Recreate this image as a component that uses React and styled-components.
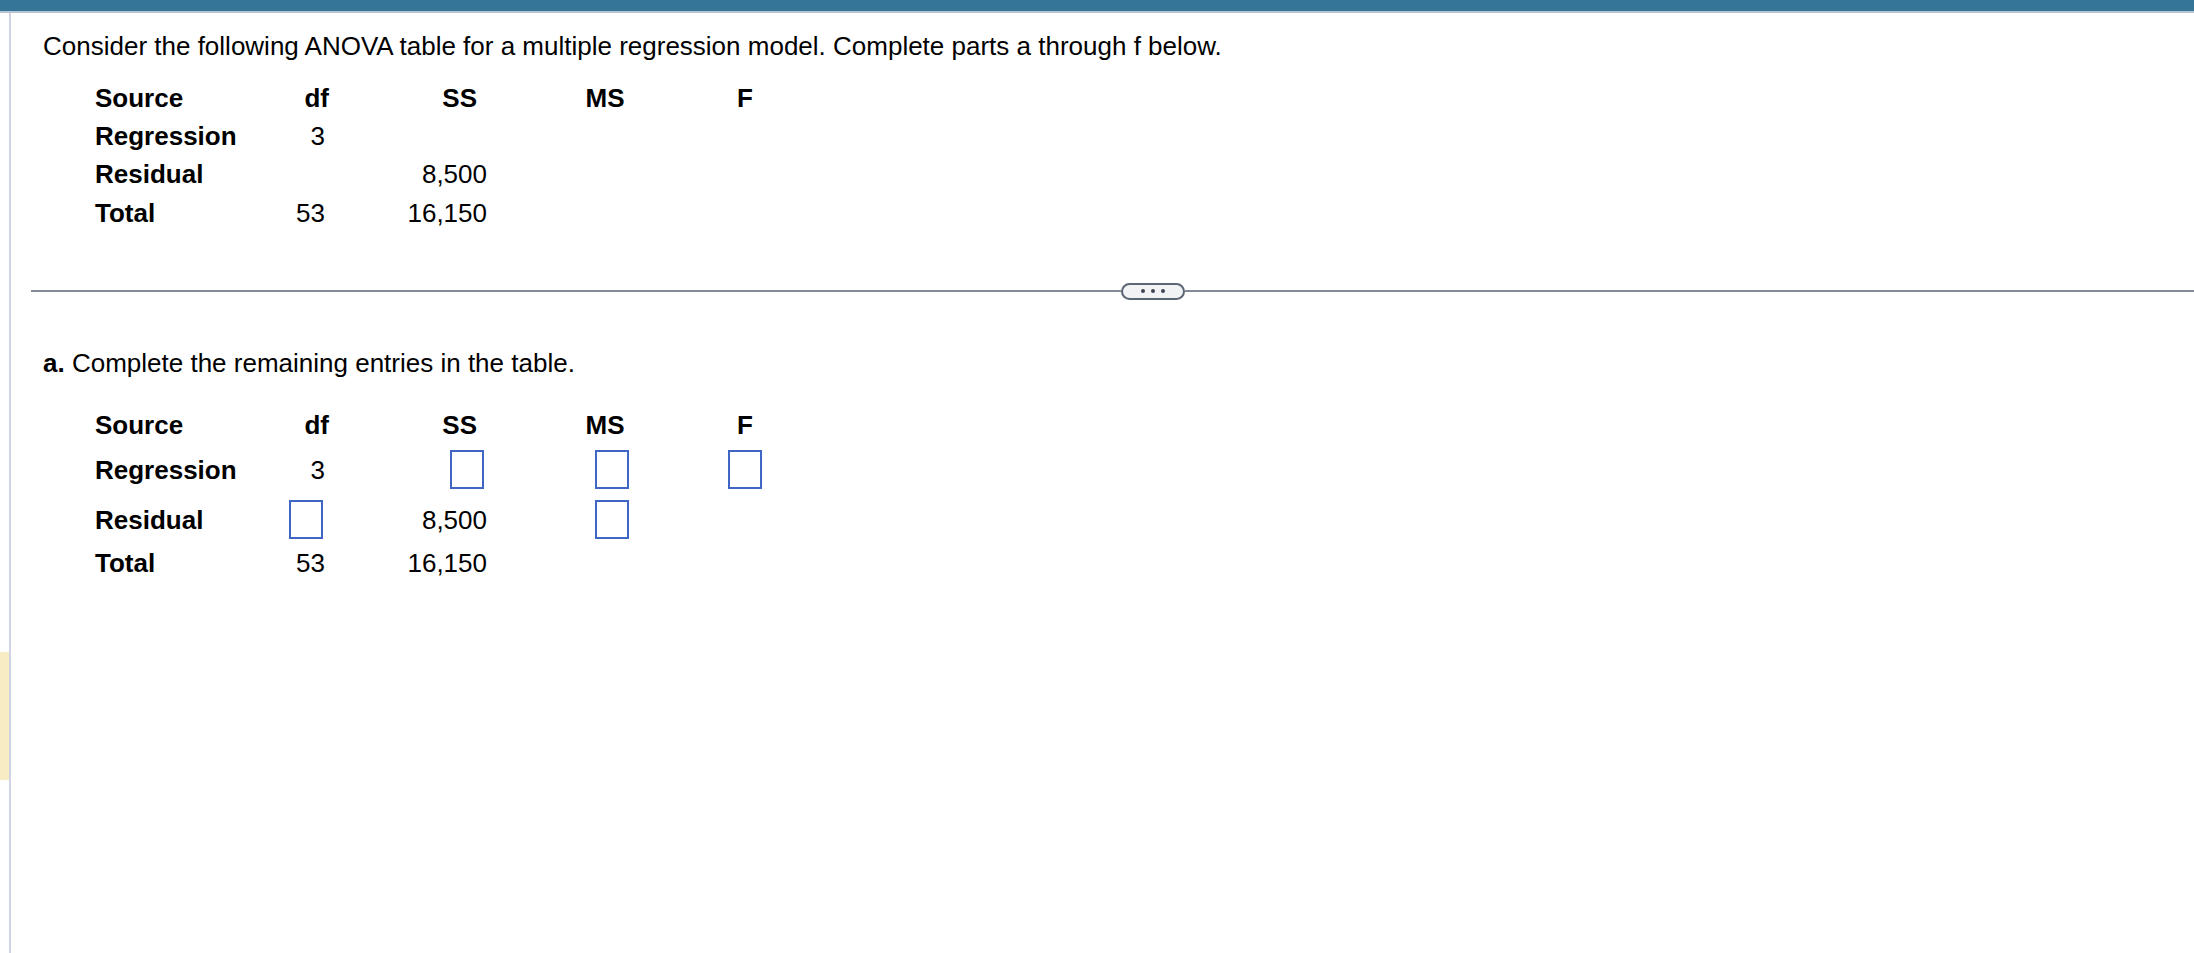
import styled, { createGlobalStyle } from 'styled-components'

const GlobalStyle = createGlobalStyle`
  html, body {
    margin: 0;
    padding: 0;
    background: #fff;
  }
  body {
    font-family: "Liberation Sans", Arial, Helvetica, sans-serif;
    color: #000;
    overflow: hidden;
  }
`

const TopBar = styled.div`
  height: 11px;
  background: #357597;
  border-bottom: 2px solid #b8c4d2;
`

const Layout = styled.div`
  display: flex;
  min-height: calc(100vh - 13px);
`

const Gutter = styled.div`
  width: 9px;
  flex: 0 0 9px;
`

const Marker = styled.div`
  margin-top: 639px;
  height: 128px;
  background: #f8ecc5;
`

const Main = styled.div`
  flex: 1;
  border-left: 2px solid #d0d3e2;
  padding-left: 20px;
  padding-top: 18px;
`

const Block = styled.div`
  padding-left: 12px;
`

const Prompt = styled.p`
  margin: 0;
  font-size: 26px;
  line-height: 30px;
  white-space: nowrap;
`

const Grid = styled.div`
  display: grid;
  grid-template-columns: 175px 60px 160px 230px 50px;
  grid-template-rows: ${p => p.$rows};
  align-items: center;
  margin-left: 52px;
  margin-top: ${p => p.$top}px;
  font-size: 26px;
  line-height: 30px;
`

const Cell = styled.div`
  display: flex;
  justify-content: ${p =>
    p.$align === 'right' ? 'flex-end' : p.$align === 'center' ? 'center' : 'flex-start'};
  padding-right: ${p => p.$pr || 0}px;
  padding-left: ${p => p.$pl || 0}px;
  font-weight: ${p => (p.$bold ? 700 : 400)};
`

const Box = styled.div`
  box-sizing: border-box;
  width: 34px;
  height: 39px;
  border: 2px solid #3f66c5;
  background: #fff;
`

const Divider = styled.div`
  display: flex;
  align-items: center;
  margin-top: 51px;
  height: 17px;
`

const Rule = styled.div`
  height: 2px;
  background: #838b97;
  flex: ${p => (p.$fixed ? `0 0 ${p.$fixed}px` : 1)};
`

const Pill = styled.button`
  box-sizing: border-box;
  width: 64px;
  height: 17px;
  border: 2px solid #5b6573;
  border-radius: 9px;
  background: #f2f3f5;
  display: flex;
  align-items: center;
  justify-content: center;
  gap: 6px;
  padding: 0;
`

const Dot = styled.span`
  width: 4px;
  height: 4px;
  border-radius: 50%;
  background: #3e4552;
`

const PartTitle = styled(Prompt)`
  margin-top: 48px;
`

const Strong = styled.b`
  font-weight: 700;
`

const cols = {
  df: { head: 1, num: 5, box: 7 },
  ss: { head: 13, num: 3, box: 6 },
}

const GivenTable = () => (
  <Grid $rows="repeat(4, 38.2px)" $top={18}>
    <Cell $bold>Source</Cell>
    <Cell $align="right" $pr={cols.df.head} $bold>df</Cell>
    <Cell $align="right" $pr={cols.ss.head} $bold>SS</Cell>
    <Cell $align="center" $bold>MS</Cell>
    <Cell $align="center" $bold>F</Cell>

    <Cell $bold>Regression</Cell>
    <Cell $align="right" $pr={cols.df.num}>3</Cell>
    <Cell />
    <Cell />
    <Cell />

    <Cell $bold>Residual</Cell>
    <Cell />
    <Cell $align="right" $pr={cols.ss.num}>8,500</Cell>
    <Cell />
    <Cell />

    <Cell $bold>Total</Cell>
    <Cell $align="right" $pr={cols.df.num}>53</Cell>
    <Cell $align="right" $pr={cols.ss.num}>16,150</Cell>
    <Cell />
    <Cell />
  </Grid>
)

const AnswerTable = () => (
  <Grid $rows="40px 50px 50px 37px" $top={27}>
    <Cell $bold>Source</Cell>
    <Cell $align="right" $pr={cols.df.head} $bold>df</Cell>
    <Cell $align="right" $pr={cols.ss.head} $bold>SS</Cell>
    <Cell $align="center" $bold>MS</Cell>
    <Cell $align="center" $bold>F</Cell>

    <Cell $bold>Regression</Cell>
    <Cell $align="right" $pr={cols.df.num}>3</Cell>
    <Cell $align="right" $pr={cols.ss.box}><Box /></Cell>
    <Cell $align="center" $pl={13}><Box /></Cell>
    <Cell $align="center"><Box /></Cell>

    <Cell $bold>Residual</Cell>
    <Cell $align="right" $pr={cols.df.box}><Box /></Cell>
    <Cell $align="right" $pr={cols.ss.num}>8,500</Cell>
    <Cell $align="center" $pl={13}><Box /></Cell>
    <Cell />

    <Cell $bold>Total</Cell>
    <Cell $align="right" $pr={cols.df.num}>53</Cell>
    <Cell $align="right" $pr={cols.ss.num}>16,150</Cell>
    <Cell />
    <Cell />
  </Grid>
)

const App = () => {
  return (
    <>
      <GlobalStyle />
      <TopBar />
      <Layout>
        <Gutter>
          <Marker />
        </Gutter>
        <Main>
          <Block>
            <Prompt>
              Consider the following ANOVA table for a multiple regression model. Complete parts a through f below.
            </Prompt>
            <GivenTable />
          </Block>
          <Divider>
            <Rule $fixed={1090} />
            <Pill aria-label="more">
              <Dot />
              <Dot />
              <Dot />
            </Pill>
            <Rule />
          </Divider>
          <Block>
            <PartTitle>
              <Strong>a.</Strong> Complete the remaining entries in the table.
            </PartTitle>
            <AnswerTable />
          </Block>
        </Main>
      </Layout>
    </>
  )
}

export default App
